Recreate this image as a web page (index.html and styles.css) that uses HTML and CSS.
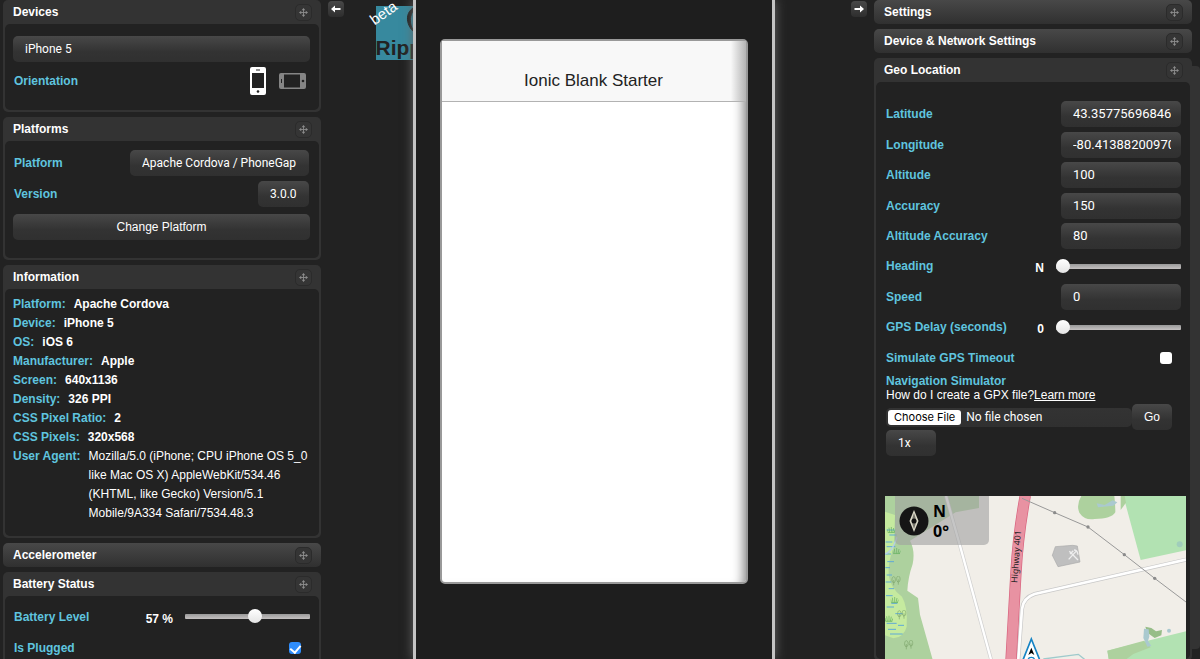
FILE: index.html
```html
<!DOCTYPE html>
<html lang="en">

<head>
  <meta charset="UTF-8">
  <meta name="viewport" content="width=device-width, initial-scale=1.0">
  <title>Ripple Emulator</title>
  <link rel="stylesheet" href="styles.css">
</head>

<body>
  <!-- shared icons -->
  <svg class="defs" width="0" height="0" aria-hidden="true">
    <symbol id="move" viewBox="0 0 10 10">
      <path d="M5 1v8M1 5h8" stroke="#8c8c8c" fill="none" />
      <path d="M5 0l2 2.500H3zM5 10l2-2.500H3zM0 5l2.500-2v4zM10 5L7.500 3v4z" fill="#8c8c8c" />
    </symbol>
    <symbol id="trees" viewBox="0 0 30 30">
      <path d="M8 28V12M4 17l4 4 4-4M8 2C2 2 1 18 6 18M8 2c6 0 7 16 2 16M22 26V10M18 15l4 4 4-4M22 0c-6 0-7 16-2 16M22 0c6 0 7 16 2 16" stroke="#7fa66c" stroke-width="2" fill="none" />
    </symbol>
    <symbol id="reed" viewBox="0 0 24 20">
      <path d="M2 18L0 8M7 18L5 3M12 18V1M16 18l3-14M20 18l4-9M2 18h20" stroke="#5fae5c" stroke-width="2" fill="none" />
    </symbol>
  </svg>

  <main class="emulator">
    <aside class="side side-left">
      <section class="panel">
        <header class="panel-head"><h2>Devices</h2><button class="move" aria-label="Move"><svg><use href="#move" /></svg></button></header>
        <div class="panel-body devices">
          <select class="field wide" aria-label="Device"><option>iPhone 5</option></select>
          <div class="row">
            <span class="label">Orientation</span>
            <div class="orientation">
              <button class="rotate" aria-label="Portrait">
                <svg width="16" height="28" viewBox="0 0 16 28">
                  <path fill="#fff" fill-rule="evenodd" d="M2 0h12a2 2 0 0 1 2 2v24a2 2 0 0 1-2 2H2a2 2 0 0 1-2-2V2a2 2 0 0 1 2-2zM2 6v15h12V6z" />
                  <path d="M6 3h4" stroke="#222" />
                  <circle cx="8" cy="24.500" r="1.300" fill="#222" />
                </svg>
              </button>
              <button class="rotate" aria-label="Landscape">
                <svg width="27" height="16" viewBox="0 0 27 16">
                  <path fill="#858585" fill-rule="evenodd" d="M2 0h23a2 2 0 0 1 2 2v12a2 2 0 0 1-2 2H2a2 2 0 0 1-2-2V2a2 2 0 0 1 2-2zM5 1.500v13h16v-13z" />
                  <path d="M2.500 6v4" stroke="#222" />
                  <circle cx="24" cy="8" r="1.300" fill="#222" />
                </svg>
              </button>
            </div>
          </div>
        </div>
      </section>

      <section class="panel">
        <header class="panel-head"><h2>Platforms</h2><button class="move" aria-label="Move"><svg><use href="#move" /></svg></button></header>
        <div class="panel-body platforms">
          <div class="row">
            <label class="label" for="platform">Platform</label>
            <select class="field" id="platform"><option>Apache Cordova / PhoneGap</option></select>
          </div>
          <div class="row">
            <label class="label" for="version">Version</label>
            <select class="field" id="version"><option>3.0.0</option></select>
          </div>
          <button class="field wide change">Change Platform</button>
        </div>
      </section>

      <section class="panel">
        <header class="panel-head"><h2>Information</h2><button class="move" aria-label="Move"><svg><use href="#move" /></svg></button></header>
        <dl class="panel-body info">
          <div><dt>Platform:</dt><dd>Apache Cordova</dd></div>
          <div><dt>Device:</dt><dd>iPhone 5</dd></div>
          <div><dt>OS:</dt><dd>iOS 6</dd></div>
          <div><dt>Manufacturer:</dt><dd>Apple</dd></div>
          <div><dt>Screen:</dt><dd>640x1136</dd></div>
          <div><dt>Density:</dt><dd>326 PPI</dd></div>
          <div><dt>CSS Pixel Ratio:</dt><dd>2</dd></div>
          <div><dt>CSS Pixels:</dt><dd>320x568</dd></div>
          <div class="agent"><dt>User Agent:</dt><dd>Mozilla/5.0 (iPhone; CPU iPhone OS 5_0 like Mac OS X) AppleWebKit/534.46 (KHTML, like Gecko) Version/5.1 Mobile/9A334 Safari/7534.48.3</dd></div>
        </dl>
      </section>

      <section class="panel closed">
        <header class="panel-head"><h2>Accelerometer</h2><button class="move" aria-label="Move"><svg><use href="#move" /></svg></button></header>
      </section>

      <section class="panel">
        <header class="panel-head"><h2>Battery Status</h2><button class="move" aria-label="Move"><svg><use href="#move" /></svg></button></header>
        <div class="panel-body battery">
          <div class="row">
            <label class="label" for="battery">Battery Level</label>
            <output class="value" for="battery">57 %</output>
            <input type="range" id="battery" min="0" max="100" value="57">
          </div>
          <div class="row">
            <label class="label" for="plugged">Is Plugged</label>
            <input type="checkbox" id="plugged" checked>
          </div>
        </div>
      </section>
    </aside>

    <div class="stage">
      <button class="toggle" aria-label="Hide left panel">
        <svg width="10" height="8" viewBox="0 0 10 8"><path d="M0 4l4-3.500V3h5.500v2H4v2.500z" fill="#fff" /></svg>
      </button>
      <div class="center">
        <div class="logo">
          <svg width="54" height="54" viewBox="0 0 54 54">
            <rect width="54" height="54" fill="#37899e" />
            <path d="M42 0C29 3 28 18 39 27C32 18 33 6 42 0z" fill="#222" stroke="#222" />
          </svg>
          <span class="beta">beta</span>
          <span class="brand">Ripple</span>
        </div>
        <div class="phone">
          <div class="screen">
            <header class="app-bar"><h1>Ionic Blank Starter</h1></header>
          </div>
        </div>
      </div>
      <button class="toggle" aria-label="Hide right panel">
        <svg width="10" height="8" viewBox="0 0 10 8"><path d="M10 4L6 .5V3H.5v2H6v2.500z" fill="#fff" /></svg>
      </button>
    </div>

    <aside class="side side-right">
      <section class="panel closed">
        <header class="panel-head"><h2>Settings</h2><button class="move" aria-label="Move"><svg><use href="#move" /></svg></button></header>
      </section>
      <section class="panel closed">
        <header class="panel-head"><h2>Device &amp; Network Settings</h2><button class="move" aria-label="Move"><svg><use href="#move" /></svg></button></header>
      </section>
      <section class="panel">
        <header class="panel-head"><h2>Geo Location</h2><button class="move" aria-label="Move"><svg><use href="#move" /></svg></button></header>
        <div class="panel-body geo">
          <div class="geo-rows">
            <div class="row"><label class="label" for="lat">Latitude</label><input class="field" type="text" id="lat" value="43.35775696846"></div>
            <div class="row"><label class="label" for="lng">Longitude</label><input class="field" type="text" id="lng" value="-80.41388200970"></div>
            <div class="row"><label class="label" for="alt">Altitude</label><input class="field" type="text" id="alt" value="100"></div>
            <div class="row"><label class="label" for="acc">Accuracy</label><input class="field" type="text" id="acc" value="150"></div>
            <div class="row"><label class="label" for="altacc">Altitude Accuracy</label><input class="field" type="text" id="altacc" value="80"></div>
            <div class="row">
              <label class="label" for="heading">Heading</label>
              <output class="value" for="heading">N</output>
              <input type="range" id="heading" min="0" max="360" value="0">
            </div>
            <div class="row"><label class="label" for="speed">Speed</label><input class="field" type="text" id="speed" value="0"></div>
            <div class="row">
              <label class="label" for="delay">GPS Delay (seconds)</label>
              <output class="value" for="delay">0</output>
              <input type="range" id="delay" min="0" max="60" value="0">
            </div>
            <div class="row"><label class="label" for="timeout">Simulate GPS Timeout</label><input type="checkbox" id="timeout"></div>
          </div>

          <div class="nav-sim">
            <label class="label" for="gpx">Navigation Simulator</label>
            <p>How do I create a GPX file?<a href="#">Learn more</a></p>
            <div class="gpx-row">
              <input type="file" id="gpx">
              <button class="field go">Go</button>
            </div>
            <select class="field rate" aria-label="Replay speed"><option>1x</option></select>
          </div>

          <div class="map">
            <svg class="tiles" viewBox="45 48 903 489" role="img" aria-label="Map">
              <rect x="45" y="48" width="903" height="489" fill="#f1eee8" />
              <path d="M45 48h282v36l-70 13-137 85q16 30 8 70-14 40-16 80l32 22 6 50 38 135H45z" fill="#add19e" />
              <path d="M45 95l30 10-4 100q-18 40-15 80 5 40 40 65 18 30 14 90-8 32-40 35l-25-9z" fill="#c5ea9f" />
              <path d="M50 150h24M58 165h22M47 186h20M50 200h26M45 222h18M52 245h20M46 263h14M50 285h16M47 306h17M56 326h16M48 347h20M64 370h18M50 381h22M76 401h22M50 430h30M84 436h18M54 448h24M60 462h38" stroke="#5fa9d6" stroke-width="3" />
              <path d="M45 222c20-6 28-28 36-50" fill="none" stroke="#b5cfe5" stroke-width="4" />
              <use href="#reed" x="52" y="140" width="24" height="20" />
              <use href="#reed" x="68" y="203" width="24" height="20" />
              <use href="#reed" x="62" y="350" width="24" height="20" />
              <use href="#reed" x="45" y="406" width="24" height="20" />
              <use href="#trees" x="63" y="288" width="30" height="30" />
              <use href="#trees" x="80" y="390" width="30" height="30" />
              <use href="#trees" x="101" y="480" width="30" height="30" />

              <path d="M760 48h188v163l-136 29z" fill="#b2e2b2" />
              <path d="M634 48q-16 26-6 50 16 24 46 19 50 0 62-20 0-26-3-49z" fill="#add19e" />
              <path d="M752 90l16-22-4-20h-12z" fill="#add19e" />
              <path d="M680 70l24 5 24-14 14 6-12 10-46 5z" fill="#aac9cf" />
              <circle cx="929" cy="193" r="9" fill="#a0cdbb" />
              <path d="M712 512l236-58v83H716z" fill="#b2e2b2" />
              <path d="M712 512l110-30 20 20-52 20-20 15h-54z" fill="#add19e" />
              <path d="M826 440l18 4 14 10 18-4-2 16-20 8-22-16z" fill="#97bd88" />
              <path d="M822 446l14 2 2 22-4 12 10 16-12 2-12-26z" fill="#aac9cf" />
              <circle cx="897" cy="452" r="6" fill="#aac9cf" />
              <path d="M520 537l105-14 20 16" fill="none" stroke="#9fcacc" stroke-width="4" />

              <path d="M228 48l45 160 90 330" fill="none" stroke="#cfcfcf" stroke-width="11" />
              <path d="M228 48l45 160 90 330" fill="none" stroke="#fff" stroke-width="7" />
              <path d="M445 537l11-150q4-34 38-45l454-103" fill="none" stroke="#c8c8c8" stroke-width="12" />
              <path d="M445 537l11-150q4-34 38-45l454-103" fill="none" stroke="#fff" stroke-width="8" />
              <path d="M466 46q-22 120-28 230l-15 265" fill="none" stroke="#d8627e" stroke-width="34" />
              <path d="M466 46q-22 120-28 230l-15 265" fill="none" stroke="#e892a2" stroke-width="30" />
              <text class="road" transform="translate(442 309) rotate(-86)">Highway 401</text>

              <path d="M456 55l98 43 100 43 109 83 91 71 94 71" fill="none" stroke="#999" stroke-width="3" />
              <g fill="#8b8b8b"><circle cx="554" cy="98" r="5" /><circle cx="654" cy="141" r="5" /><circle cx="763" cy="224" r="5" /><circle cx="854" cy="295" r="5" /></g>
              <path d="M556 200l52-4 14 2 8 48-66 14-17-34z" fill="#bfbfbf" stroke="#aaa" stroke-width="2" />
              <path d="M598 214l26 26M620 212l-24 26M600 222l10-10M612 210q10 0 12 14" fill="none" stroke="#eee" stroke-width="4" />

              <path d="M484 477l36 90h-72z" fill="#fff" stroke="#1583c4" stroke-width="5" />
              <path d="M484 503l9 22-9-6-9 6z" fill="#000" />
              <circle cx="484" cy="542" r="10" fill="none" stroke="#1583c4" stroke-width="4" />
            </svg>
            <div class="compass">
              <svg width="30" height="30" viewBox="0 0 30 30">
                <circle cx="15" cy="15" r="14.500" fill="#151515" />
                <path d="M15 4l4.500 11L15 26l-4.500-11z" fill="#dcdac8" />
                <path d="M15 7l2.500 8L15 23l-2.500-8z" fill="#77766c" />
                <circle cx="15" cy="15" r="2.500" fill="#111" />
              </svg>
              <div>N<br>0°</div>
            </div>
          </div>
        </div>
      </section>
    </aside>
    <div class="scrollbar"></div>
  </main>
</body>

</html>
```
FILE: styles.css
```css
* {
  box-sizing: border-box;
}

body {
  margin: 0;
  background: #222;
  color: #fff;
  font: 12px/16px "Liberation Sans", Arial, sans-serif;
}

h1, h2, p, dl, dd {
  margin: 0;
}

.defs {
  position: absolute;
}

.emulator {
  display: grid;
  grid-template-columns: 318px 1fr 318px 8px;
  padding-left: 3px;
  height: 100vh;
  overflow: hidden;
}

/* panels */
.side {
  display: flex;
  flex-direction: column;
  gap: 5px;
  min-height: 0;
}

.panel {
  flex: none;
  border-radius: 5px;
  background: #333;
  padding: 0 2px 2px;
}

.panel.closed {
  background: linear-gradient(#484848, #303030);
  padding-bottom: 0;
}

.panel-head {
  display: flex;
  align-items: center;
  justify-content: space-between;
  height: 24px;
  padding: 0 7px 0 8px;
}

.panel-head h2 {
  font-size: 12px;
  line-height: 16px;
}

.move {
  display: flex;
  align-items: center;
  justify-content: center;
  width: 17px;
  height: 17px;
  margin-top: 1px;
  padding: 0;
  border: 1px solid #2b2b2b;
  border-radius: 5px;
  background: #353535;
}

.move svg {
  width: 9px;
  height: 9px;
}

.panel-body {
  border-radius: 5px;
  background: #222;
}

.row {
  display: flex;
  align-items: center;
  justify-content: space-between;
}

.label {
  color: #5fc4df;
  font-weight: bold;
}

.value {
  margin: 4px 12px 0 auto;
  font-weight: bold;
}

/* controls */
.field {
  appearance: none;
  height: 26px;
  padding: 0 12px;
  border: 0;
  border-radius: 5px;
  background: linear-gradient(#484848, #333 60%, #303030);
  color: #fff;
  font: 12px/26px Roboto, sans-serif;
}

input.field {
  padding-right: 10px;
  font-size: 13px;
}

.field.wide {
  width: 100%;
}

.field.change,
.field.go {
  font: 12px/26px "Liberation Sans", Arial, sans-serif;
}

input[type="range"] {
  appearance: none;
  width: 125px;
  height: 16px;
  margin: 0;
  background: none;
}

input[type="range"]::-webkit-slider-runnable-track {
  height: 5px;
  border-radius: 1px;
  background: linear-gradient(#999, #c4c0c0);
}

input[type="range"]::-webkit-slider-thumb {
  appearance: none;
  width: 14px;
  height: 14px;
  margin-top: -5px;
  border-radius: 50%;
  background: linear-gradient(#fff, #e4e4e4);
}

input[type="checkbox"] {
  appearance: none;
  width: 12px;
  height: 12px;
  margin: 0 9px 0 0;
  border-radius: 3px;
  background: #fff;
}

input[type="checkbox"]:checked {
  background: #2f8dfb;
}

input[type="checkbox"]:checked::after {
  content: "";
  display: block;
  width: 5px;
  height: 8px;
  margin: 1px auto 0;
  border: solid #fff;
  border-width: 0 2px 2px 0;
  transform: rotate(40deg);
}

/* left side */
.devices {
  padding: 12px 9px 11px 8px;
}

.devices .row {
  height: 36px;
  margin-top: 1px;
  padding: 0 4px 0 1px;
}

.orientation {
  display: flex;
  align-items: center;
  gap: 13px;
}

.rotate {
  display: flex;
  padding: 0;
  border: 0;
  background: none;
}

.platforms {
  padding: 6px 9px 18px 8px;
}

.platforms .row {
  height: 31px;
  padding: 0 1px;
}

.change {
  margin-top: 5px;
}

.info {
  padding: 6px 8px 13px;
  line-height: 19px;
}

.info div {
  display: flex;
  gap: 8px;
}

.info dt {
  flex: none;
  color: #5fc4df;
  font-weight: bold;
}

.info dd {
  font-weight: bold;
}

.info .agent dd {
  font-weight: normal;
}

.battery {
  padding: 5px 9px;
}

.battery .row {
  height: 31px;
}

/* device */
.stage {
  display: grid;
  grid-template-columns: 16px 1fr 16px;
  padding: 0 7px;
}

.toggle {
  display: flex;
  align-items: center;
  justify-content: center;
  width: 16px;
  height: 16px;
  margin-top: 1px;
  padding: 0;
  border: 0;
  border-radius: 4px;
  background: linear-gradient(#484848, #2e2e2e);
}

.center {
  display: flex;
  justify-content: center;
  padding-right: 8px;
}

.phone {
  position: relative;
  flex: none;
  width: 362px;
  padding: 39px 24px 0;
  border: solid #c4c4c4;
  border-width: 0 3px;
  background: #1e1e1e;
  box-shadow: 0 0 10px #666;
}

.screen {
  height: 545px;
  border: 2px solid #999;
  border-radius: 5px;
  background: #fff;
  box-shadow: inset -12px 0 12px -10px #777;
}

.app-bar {
  height: 61px;
  padding-top: 30px;
  border-bottom: 1px solid #b2b2b2;
  background: linear-gradient(to right, #f8f8f8 95%, #b4b4b4);
  text-align: center;
}

.app-bar h1 {
  color: #222;
  font-size: 17px;
  font-weight: normal;
  line-height: 20px;
}

/* sits partly behind the phone */
.logo {
  position: relative;
  flex: none;
  width: 54px;
  height: 54px;
  margin: 6px -17px 0 -37px;
}

.beta {
  position: absolute;
  top: 0;
  left: -7px;
  font-size: 15px;
  line-height: 14px;
  transform: rotate(-35deg);
}

.brand {
  position: absolute;
  left: 0;
  bottom: 4px;
  color: #222;
  font: bold 21px/16px "Liberation Sans", Arial, sans-serif;
}

/* right side */
.geo {
  padding: 17px 9px 0 10px;
}

.geo .field {
  width: 120px;
}

.geo-rows {
  display: grid;
  grid-auto-rows: 1fr;
  height: 274px;
}

.nav-sim {
  padding-top: 1px;
  line-height: 14px;
}

.nav-sim a {
  color: #fff;
}

.gpx-row {
  display: flex;
  align-items: center;
  margin-top: 2px;
}

input[type="file"] {
  width: 246px;
  height: 19px;
  border-radius: 5px;
  background: linear-gradient(#333, #303030);
  font: 12px/19px Roboto, sans-serif;
}

input[type="file"]::file-selector-button {
  height: 15px;
  margin: 0 5px 0 2px;
  padding: 0 6px;
  border: 0;
  border-radius: 3px;
  background: #fff;
  color: #000;
  font: 11px/15px Inter, sans-serif;
}

.geo .go {
  width: 40px;
}

.geo .rate {
  width: 50px;
}

.map {
  position: relative;
  margin: 40px -5px 0 -1px;
}

.tiles {
  display: block;
  width: 100%;
}

.road {
  font: 26px "Noto Sans", sans-serif;
  fill: #222;
}

.compass {
  position: absolute;
  top: 0;
  left: 10px;
  display: flex;
  align-items: center;
  gap: 4px;
  width: 94px;
  height: 49px;
  padding-left: 4px;
  border-radius: 0 0 5px 5px;
  background: rgba(160, 160, 160, 0.6);
  color: #000;
  font: bold 16px/20px "Noto Sans", sans-serif;
}

.scrollbar {
  height: 583px;
  margin-top: 66px;
  border-radius: 0 4px 4px 0;
  background: #333;
}
```
